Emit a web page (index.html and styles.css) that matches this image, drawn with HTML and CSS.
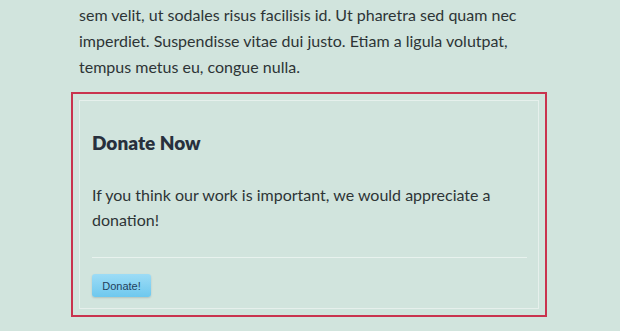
FILE: index.html
```html
<!DOCTYPE html>
<html lang="en">
<head>
  <meta charset="UTF-8" />
  <meta name="viewport" content="width=device-width, initial-scale=1.0"/>
  <title>Donate</title>
  <link rel="stylesheet" href="styles.css">
</head>
<body>

  <div class="content">
    <p class="intro">sem velit, ut sodales risus facilisis id. Ut pharetra sed quam nec imperdiet. Suspendisse vitae dui justo. Etiam a ligula volutpat, tempus metus eu, congue nulla.</p>

    <div class="donate-box">
      <h3>Donate Now</h3>
      <p>If you think our work is important, we would appreciate a donation!</p>
      <hr>
      <button class="donate-button">Donate!</button>
    </div>
  </div>

</body>
</html>
```

FILE: styles.css
```css
html {
  background-color: #d1e4dd;
}
body {
  font-family: Lato, "Open Sans", sans-serif;
  margin: 0;
  padding: 0 0 22px;
  min-height: 309px;
  background-color: #d1e4dd;
  color: #2d3436;
}
.content {
  width: 460px;
  margin-left: 79px;
  padding-top: 2px;
}
.intro {
  margin: 0;
  font-size: 16px;
  line-height: 26px;
}
.donate-box {
  margin-top: 20px;
  padding: 12px 11px 11px 12px;
  border: 1px solid rgba(255, 255, 255, 0.45);
  outline: 2px solid #c9334e;
  outline-offset: 6px;
}
.donate-box h3 {
  margin: 17px 0 0;
  font-size: 19px;
  font-weight: 800;
  line-height: 25px;
  color: #28303d;
}
.donate-box p {
  margin: 27px 0 0;
  font-size: 16px;
  line-height: 25px;
}
.donate-box hr {
  margin: 25px 0 0;
  border: none;
  border-top: 1px solid rgba(255, 255, 255, 0.5);
}
.donate-button {
  margin-top: 16px;
  display: block;
  width: 59px;
  height: 23px;
  padding: 0;
  font-family: "Liberation Sans", Arial, sans-serif;
  font-size: 11px;
  color: #243f5c;
  background: linear-gradient(#9ddcf6, #6ec8ee);
  border: none;
  border-radius: 3px;
  box-shadow: 0 1px 2px rgba(0, 0, 0, 0.15);
  cursor: pointer;
}
```
